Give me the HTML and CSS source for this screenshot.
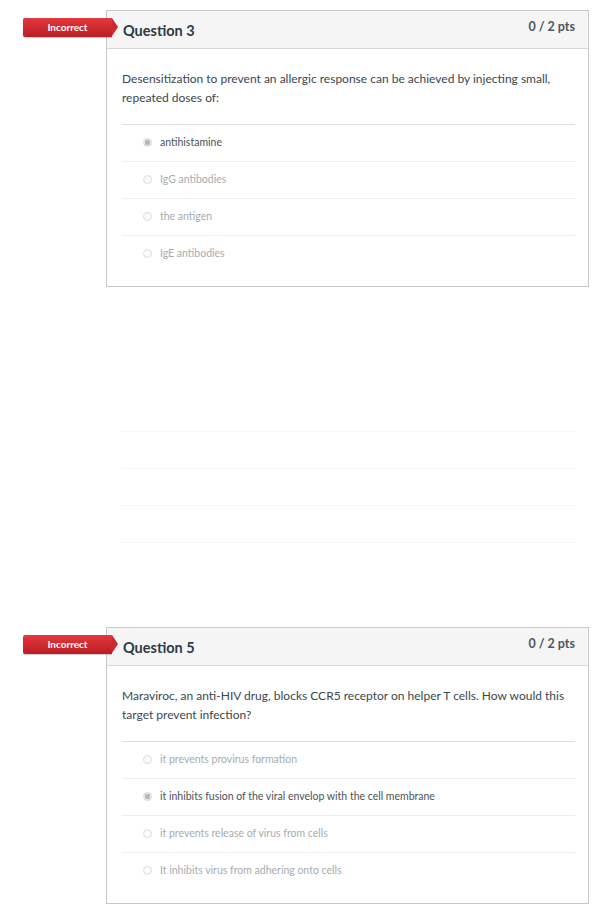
FILE: index.html
```html
<!DOCTYPE html>
<html lang="en">
<head>
    <meta charset="UTF-8">
    <meta name="viewport" content="width=device-width, initial-scale=1.0">
    <title>Quiz Results</title>
    <link rel="stylesheet" href="styles.css">
</head>
<body>
    <div class="quiz">
        <div class="question">
            <span class="badge">Incorrect</span>
            <div class="card">
                <div class="card-header">
                    <h3 class="card-title">Question 3</h3>
                    <span class="pts">0 / 2 pts</span>
                </div>
                <div class="card-body">
                    <p class="question-text">Desensitization to prevent an allergic response can be achieved by injecting small, repeated doses of:</p>
                    <ul class="answers">
                        <li class="answer selected"><span class="radio"></span>antihistamine</li>
                        <li class="answer"><span class="radio"></span>IgG antibodies</li>
                        <li class="answer"><span class="radio"></span>the antigen</li>
                        <li class="answer"><span class="radio"></span>IgE antibodies</li>
                    </ul>
                </div>
            </div>
        </div>

        <!-- question 4 was hidden in the capture, only faint lines left -->
        <div class="ghost">
            <div class="ghost-row"></div>
            <div class="ghost-row"></div>
            <div class="ghost-row"></div>
            <div class="ghost-row"></div>
        </div>

        <div class="question">
            <span class="badge">Incorrect</span>
            <div class="card">
                <div class="card-header">
                    <h3 class="card-title">Question 5</h3>
                    <span class="pts">0 / 2 pts</span>
                </div>
                <div class="card-body">
                    <p class="question-text">Maraviroc, an anti-HIV drug, blocks CCR5 receptor on helper T cells. How would this target prevent infection?</p>
                    <ul class="answers">
                        <li class="answer"><span class="radio"></span>it prevents provirus formation</li>
                        <li class="answer selected"><span class="radio"></span>it inhibits fusion of the viral envelop with the cell membrane</li>
                        <li class="answer"><span class="radio"></span>it prevents release of virus from cells</li>
                        <li class="answer"><span class="radio"></span>It inhibits virus from adhering onto cells</li>
                    </ul>
                </div>
            </div>
        </div>
    </div>
</body>
</html>
```

FILE: styles.css
```css
* { margin: 0; padding: 0; box-sizing: border-box; }
body { background: #fff; font-family: Lato, 'Liberation Sans', sans-serif; color: #2d3b45; }
.quiz { padding-top: 10px; }

.question { position: relative; margin-left: 106px; width: 483px; }
.badge { position: absolute; left: -83px; top: 8px; width: 89px; height: 19px; line-height: 19px; text-align: center; color: #fff; font-size: 10px; font-weight: bold; background: linear-gradient(#e3383e, #bb1e23); border-radius: 2px 0 0 2px; box-shadow: 0 1px 1px rgba(0,0,0,0.2); }
.badge::after { content: ''; position: absolute; left: 100%; top: 0; border-top: 9.5px solid transparent; border-bottom: 9.5px solid transparent; border-left: 6px solid #cc2a30; }

.card { border: 1px solid #c4c8cb; background: #fff; }
.card-header { height: 38px; display: flex; justify-content: space-between; align-items: center; padding: 0 13px 0 16px; background: #f5f5f5; border-bottom: 1px solid #d6d8da; }
.card-title { font-size: 14.5px; font-weight: bold; color: #2d3b45; margin-top: 1px; }
.pts { font-size: 12.5px; font-weight: bold; color: #4b5860; margin-top: -6px; }

.card-body { padding: 20px 13px 14px 15px; }
.question-text { font-size: 12px; line-height: 19px; color: #3a4750; padding-bottom: 17px; border-bottom: 1px solid #dcdfe1; }
.answers { list-style: none; }
.answer { height: 37px; display: flex; align-items: center; padding: 0 0 2px 21px; font-size: 10.5px; color: #a6acb0; border-top: 1px solid #eceeef; }
.answer:first-child { border-top: none; height: 36px; }
.answer.selected { color: #4a5359; }
.radio { width: 9px; height: 9px; border-radius: 50%; border: 1px solid #d9dcde; background: #fafafa; margin-right: 8px; flex-shrink: 0; }
.answer.selected .radio { border-color: #d4d7d9; background: radial-gradient(circle, #b5b9bc 0 2.5px, #eceeef 3px); }

.ghost { height: 340px; padding: 144px 23px 0 122px; }
.ghost-row { height: 37px; border-top: 1px solid #f5f6f6; }
```
